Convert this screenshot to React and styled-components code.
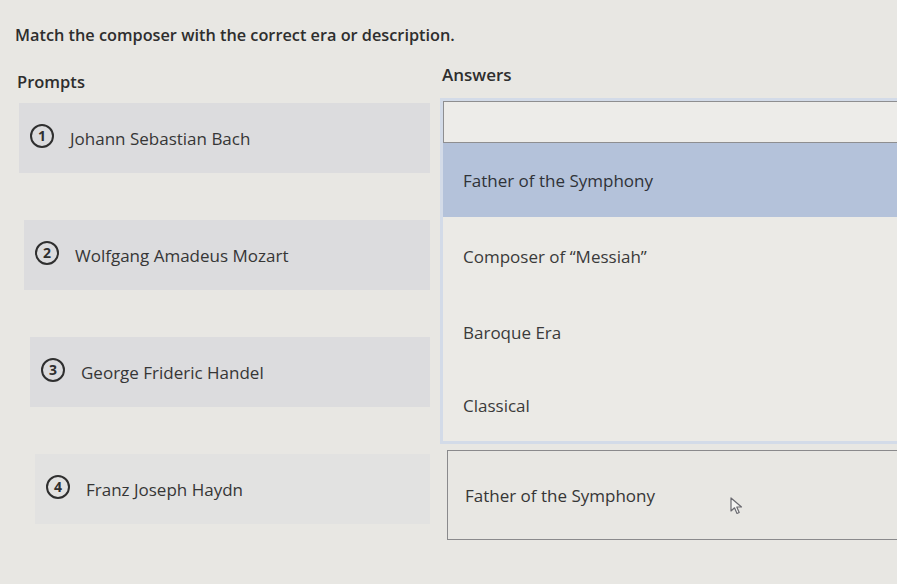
import React from "react";
import styled, { createGlobalStyle } from "styled-components";

const Global = createGlobalStyle`
  html, body { margin: 0; padding: 0; }
  body {
    background: #e8e7e3;
    font-family: "Open Sans", "Noto Sans", sans-serif;
    color: #333;
    width: 897px;
    height: 584px;
    overflow: hidden;
  }
`;

const Page = styled.div`
  padding: 24px 0 0 15px;
`;

const Title = styled.h1`
  margin: 0;
  font-size: 16.3px;
  line-height: 22px;
  font-weight: 600;
  color: #2e2e2e;
`;

const Columns = styled.div`
  display: flex;
  align-items: flex-start;
  gap: 10px;
  margin-top: 18px;
`;

const LeftCol = styled.div`
  width: 415px;
  padding-top: 7px;
  display: flex;
  flex-direction: column;
`;

const RightCol = styled.div`
  flex: 1;
  display: flex;
  flex-direction: column;
`;

const Heading = styled.h2`
  margin: 0 0 ${(p) => p.$gap}px 2px;
  font-size: ${(p) => p.$size}px;
  line-height: 22px;
  font-weight: 600;
  color: #2e2e2e;
`;

const PromptList = styled.div`
  display: flex;
  flex-direction: column;
  gap: 47px;
`;

const PromptCard = styled.div`
  height: 70px;
  margin-left: ${(p) => p.$indent}px;
  background: ${(p) => (p.$faded ? "#e2e2e1" : "#dcdcde")};
  display: flex;
  align-items: center;
  padding-left: 11px;
  gap: 16px;
`;

const Badge = styled.span`
  width: 20px;
  height: 20px;
  border: 2px solid #2f2f2f;
  border-radius: 50%;
  display: flex;
  align-items: center;
  justify-content: center;
  font-family: "Open Sans", sans-serif;
  font-size: 14px;
  line-height: 1;
  font-weight: 700;
  color: #2f2f2f;
  flex: none;
  margin-top: -5px;
`;

const PromptText = styled.span`
  font-size: 17px;
  color: #363636;
`;

const AnswerBox = styled.div`
  border: 3px solid #d3dbe8;
  border-right: none;
  background: #ebeae6;
  display: flex;
  flex-direction: column;
`;

const EmptySlot = styled.div`
  height: 40px;
  border: 1px solid #8e8e90;
  border-right: none;
  background: #edece9;
`;

const AnswerItem = styled.div`
  height: ${(p) => p.$h}px;
  display: flex;
  align-items: center;
  padding-left: 20px;
  background: ${(p) => (p.$selected ? "#b4c2da" : "transparent")};
  font-size: 17px;
  color: ${(p) => (p.$selected ? "#2f3238" : "#3a3a3a")};
`;

const DropBox = styled.div`
  margin: 6px 0 0 7px;
  height: 88px;
  border: 1px solid #8a8a8c;
  border-right: none;
  display: flex;
  align-items: center;
  padding-left: 17px;
  font-size: 17px;
  color: #363636;
  position: relative;
`;

const Cursor = styled.svg`
  position: absolute;
  left: 282px;
  top: 46px;
`;

const prompts = [
  { n: 1, name: "Johann Sebastian Bach", indent: 4 },
  { n: 2, name: "Wolfgang Amadeus Mozart", indent: 9 },
  { n: 3, name: "George Frideric Handel", indent: 15 },
  { n: 4, name: "Franz Joseph Haydn", indent: 20, faded: true },
];

const answers = [
  { text: "Father of the Symphony", h: 74, selected: true },
  { text: "Composer of \u201cMessiah\u201d", h: 78 },
  { text: "Baroque Era", h: 75 },
  { text: "Classical", h: 71 },
];

export default function App() {
  return (
    <>
      <Global />
      <Page>
        <Title>Match the composer with the correct era or description.</Title>
        <Columns>
          <LeftCol>
            <Heading $gap={10} $size={16.5}>Prompts</Heading>
            <PromptList>
              {prompts.map((p) => (
                <PromptCard key={p.n} $indent={p.indent} $faded={p.faded}>
                  <Badge>{p.n}</Badge>
                  <PromptText>{p.name}</PromptText>
                </PromptCard>
              ))}
            </PromptList>
          </LeftCol>
          <RightCol>
            <Heading $gap={12} $size={17}>Answers</Heading>
            <AnswerBox>
              <EmptySlot />
              {answers.map((a) => (
                <AnswerItem key={a.text} $h={a.h} $selected={a.selected}>
                  {a.text}
                </AnswerItem>
              ))}
            </AnswerBox>
            <DropBox>
              Father of the Symphony
              <Cursor width="14" height="18" viewBox="0 0 14 18">
                <path
                  d="M1 1 L1 14 L4.5 10.8 L7 16.5 L9.2 15.5 L6.8 10 L11.5 10 Z"
                  fill="#f4f4f2"
                  stroke="#6a6a70"
                  strokeWidth="1.2"
                  strokeLinejoin="round"
                />
              </Cursor>
            </DropBox>
          </RightCol>
        </Columns>
      </Page>
    </>
  );
}
